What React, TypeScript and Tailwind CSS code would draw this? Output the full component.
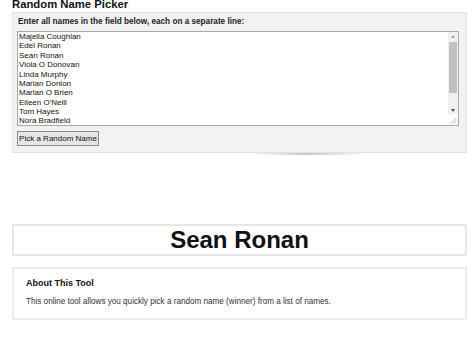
const names = [
  "Majella Coughlan",
  "Edel Ronan",
  "Sean Ronan",
  "Viola O Donovan",
  "Linda Murphy",
  "Marian Donlon",
  "Marian O Brien",
  "Eileen O'Neill",
  "Tom Hayes",
  "Nora Bradfield",
]

function Scrollbar() {
  return (
    <div className="flex w-[10px] shrink-0 flex-col bg-[#f0f0f0]">
      <div className="flex h-[9px] items-center justify-center">
        <div className="h-0 w-0 border-x-[2.5px] border-b-[3px] border-x-transparent border-b-[#a3a3a3]" />
      </div>
      <div className="mx-[1px] mt-[1px] h-[51px] bg-[#c1c1c1]" />
      <div className="flex-1" />
      <div className="flex h-[8px] items-center justify-center">
        <div className="h-0 w-0 border-x-[2.5px] border-t-[3px] border-x-transparent border-t-[#505050]" />
      </div>
      <div className="flex h-[11px] items-end justify-end bg-white pb-[1px] pr-[1px]">
        <svg width="7" height="7" viewBox="0 0 7 7">
          <path d="M6.5 1 L1 6.5 M6.5 4 L4 6.5" stroke="#9a9a9a" strokeWidth="0.8" />
        </svg>
      </div>
    </div>
  )
}

export default function App() {
  return (
    <div className="min-h-[348px] bg-white font-['Liberation_Sans',Arial,sans-serif] text-[#111]">
      <h1 className="mb-[2px] ml-[12px] mt-[-2px] h-[12px] text-[11.3px] font-bold leading-[12px]">
        Random Name Picker
      </h1>

      <div className="ml-[12px] mr-[7px] border border-[#e2e2e2] bg-[#f2f2f2] pb-[6px] pl-[4px] pr-[7px]">
        <p className="ml-[1px] pt-[2px] text-[8.2px] font-bold leading-[13px] text-[#222]">
          Enter all names in the field below, each on a separate line:
        </p>
        <div className="mt-[3px] flex h-[95px] border border-[#a9a9a9] bg-white">
          <div className="flex-1 overflow-hidden pl-[1px] text-[8px] leading-[9.37px]">
            {names.map((n) => (
              <div key={n}>{n}</div>
            ))}
          </div>
          <Scrollbar />
        </div>
        <button className="mt-[5px] block h-[15px] w-[82px] whitespace-nowrap border border-[#8a8a8a] bg-[#e6e6e6] p-0 text-[8px] leading-[13px] text-[#111]">
          Pick a Random Name
        </button>
      </div>
      <div className="ml-[250px] h-[2px] w-[115px] bg-gradient-to-r from-transparent via-[#c8c8c8] to-transparent" />

      <div className="ml-[12px] mr-[7px] mt-[69px] flex h-[32px] items-center justify-center border-2 border-[#e6e6e6]">
        <span className="text-[24px] font-bold leading-none text-[#111]">Sean Ronan</span>
      </div>

      <div className="ml-[12px] mr-[7px] mt-[11px] h-[53px] border-2 border-[#ececec] px-[12px] pt-[8px]">
        <h2 className="text-[9px] font-bold leading-[12px] text-[#111]">About This Tool</h2>
        <p className="mt-[8px] text-[8.15px] leading-[10px] text-[#333]">
          This online tool allows you quickly pick a random name (winner) from a list of names.
        </p>
      </div>
    </div>
  )
}
